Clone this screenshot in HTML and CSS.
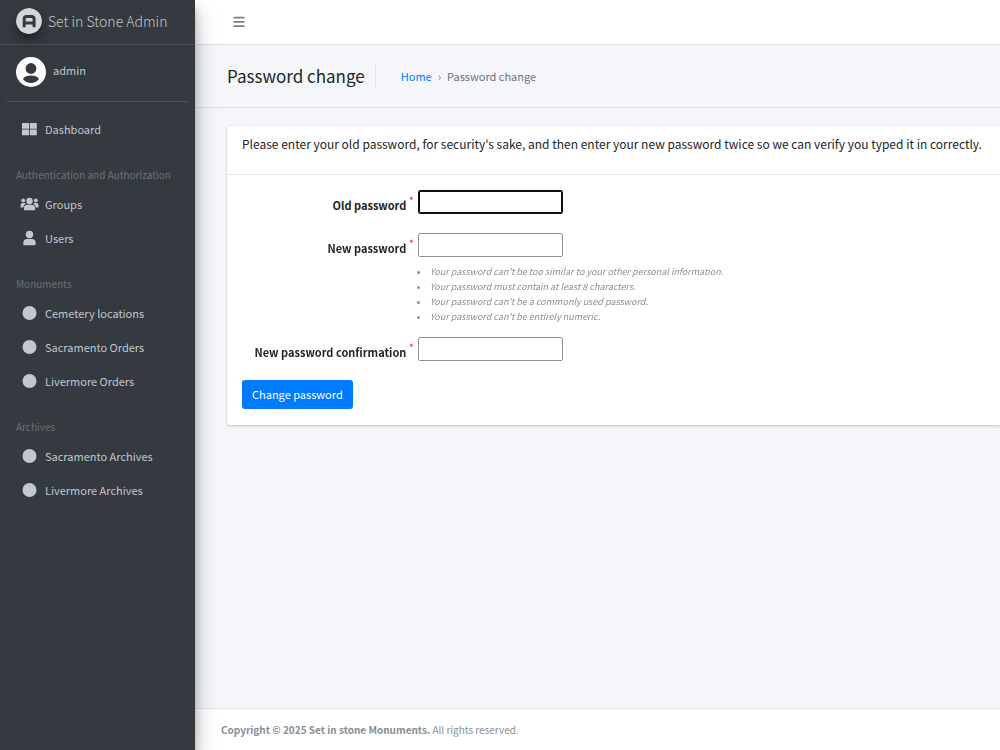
FILE: index.html
```
<!DOCTYPE html>
<html lang="en">
<head>
    <meta charset="UTF-8">
    <meta name="viewport" content="width=device-width, initial-scale=1.0">
    <title>Password change | Set in Stone Admin</title>
    <link rel="stylesheet" href="styles.css">
</head>
<body>
    <aside class="sidebar">
        <a href="#" class="brand">
            <svg class="brand-logo" viewBox="0 0 26 26" aria-hidden="true">
                <circle cx="13" cy="13" r="13" fill="#d5d6d7"/>
                <path d="M8.200 19.300V11Q8.200 8.600 10.600 8.600H15.700Q18.100 8.600 18.100 11V19.300M8.200 14.900H18.100" fill="none" stroke="#343a40" stroke-width="3"/>
            </svg>
            <span>Set in Stone Admin</span>
        </a>

        <div class="user-panel">
            <svg class="avatar" viewBox="0 0 30 30" aria-hidden="true">
                <circle cx="15" cy="15" r="15" fill="#fff"/>
                <circle cx="15" cy="11.500" r="5.400" fill="#343a40"/>
                <path d="M7 22C8.500 19.300 11.500 18.600 15 18.600S21.500 19.300 23 22C21 24.700 18.300 26 15 26S9 24.700 7 22Z" fill="#343a40"/>
            </svg>
            <a href="#">admin</a>
        </div>

        <nav class="menu">
            <a href="#" class="menu-item">
                <svg class="icon" viewBox="0 0 18 16" aria-hidden="true">
                    <path d="M1.500 2H8.500V7.700H1.500ZM9.300 2H16.300V7.700H9.300ZM1.500 8.500H8.500V14.200H1.500ZM9.300 8.500H16.300V14.200H9.300Z"/>
                </svg>
                Dashboard
            </a>

            <h2 class="menu-header">Authentication and Authorization</h2>
            <a href="#" class="menu-item">
                <svg class="icon" viewBox="0 0 18 16" aria-hidden="true">
                    <circle cx="9" cy="5" r="3.200"/>
                    <circle cx="2.700" cy="4.400" r="1.900"/>
                    <circle cx="15.300" cy="4.400" r="1.900"/>
                    <path d="M3.400 14.300V12Q3.600 8.900 6.700 8.700H11.300Q14.400 8.900 14.600 12V14.300ZM0 11.400V9Q.2 7 1.900 7H4.600L5.300 7.400Q3 8.800 2.800 11.400ZM18 11.400V9Q17.800 7 16.100 7H13.400L12.700 7.400Q15 8.800 15.200 11.400Z"/>
                </svg>
                Groups
            </a>
            <a href="#" class="menu-item">
                <svg class="icon" viewBox="0 0 18 16" aria-hidden="true">
                    <circle cx="9" cy="4.500" r="3.700"/>
                    <path d="M2.800 15.300V13Q3 9.200 6.600 9H11.400Q15 9.200 15.200 13V14.300Q15.200 15.300 14.200 15.300Z"/>
                </svg>
                Users
            </a>

            <h2 class="menu-header">Monuments</h2>
            <a href="#" class="menu-item">
                <svg class="icon" viewBox="0 0 18 16" aria-hidden="true"><circle cx="9" cy="8" r="7"/></svg>
                Cemetery locations
            </a>
            <a href="#" class="menu-item">
                <svg class="icon" viewBox="0 0 18 16" aria-hidden="true"><circle cx="9" cy="8" r="7"/></svg>
                Sacramento Orders
            </a>
            <a href="#" class="menu-item">
                <svg class="icon" viewBox="0 0 18 16" aria-hidden="true"><circle cx="9" cy="8" r="7"/></svg>
                Livermore Orders
            </a>

            <h2 class="menu-header">Archives</h2>
            <a href="#" class="menu-item">
                <svg class="icon" viewBox="0 0 18 16" aria-hidden="true"><circle cx="9" cy="8" r="7"/></svg>
                Sacramento Archives
            </a>
            <a href="#" class="menu-item">
                <svg class="icon" viewBox="0 0 18 16" aria-hidden="true"><circle cx="9" cy="8" r="7"/></svg>
                Livermore Archives
            </a>
        </nav>
    </aside>

    <div class="page">
        <header class="topbar">
            <button type="button" class="menu-toggle" aria-label="Toggle menu">
                <svg viewBox="0 0 12 12" aria-hidden="true">
                    <path d="M.5 1.700H11.500M.5 5.900H11.500M.5 10.100H11.500" stroke="#7f7f7f" stroke-width="1.700"/>
                </svg>
            </button>
        </header>

        <div class="content-header">
            <h1>Password change</h1>
            <nav class="breadcrumb" aria-label="Breadcrumb">
                <a href="#">Home</a>
                <span>›</span>
                <span>Password change</span>
            </nav>
        </div>

        <main class="content">
            <form class="card">
                <p class="card-header">Please enter your old password, for security's sake, and then enter your new password twice so we can verify you typed it in correctly.</p>
                <div class="card-body">
                    <div class="form-row">
                        <label for="old-password">Old password <span class="required">*</span></label>
                        <input type="password" id="old-password" autofocus>
                    </div>
                    <div class="form-row">
                        <label for="new-password">New password <span class="required">*</span></label>
                        <div>
                            <input type="password" id="new-password">
                            <ul class="help">
                                <li>Your password can't be too similar to your other personal information.</li>
                                <li>Your password must contain at least 8 characters.</li>
                                <li>Your password can't be a commonly used password.</li>
                                <li>Your password can't be entirely numeric.</li>
                            </ul>
                        </div>
                    </div>
                    <div class="form-row">
                        <label for="confirm-password">New password confirmation <span class="required">*</span></label>
                        <input type="password" id="confirm-password">
                    </div>
                    <button type="submit" class="btn">Change password</button>
                </div>
            </form>
        </main>

        <footer class="footer">
            <strong>Copyright © 2025 Set in stone Monuments.</strong> All rights reserved.
        </footer>
    </div>
</body>
</html>
```
FILE: styles.css
```
* {
    box-sizing: border-box;
}
body {
    margin: 0;
    display: flex;
    min-height: 100vh;
    font-family: "Source Sans Pro", "Noto Sans CJK SC", sans-serif;
    font-size: 11px;
    line-height: 17px;
    color: #212529;
    background: #f4f6f9;
}
a {
    color: #007bff;
    text-decoration: none;
}
.sidebar {
    flex: 0 0 195px;
    position: relative;
    background: #343a40;
    box-shadow: 0 11px 22px rgba(0, 0, 0, 0.25), 0 8px 8px rgba(0, 0, 0, 0.22);
    white-space: nowrap;
}
.brand {
    display: flex;
    align-items: center;
    gap: 6px;
    height: 45px;
    padding: 0 16px 3px;
    border-bottom: 1px solid #454d55;
    color: #c2c4c6;
    font-size: 14px;
    font-weight: 300;
    line-height: 20px;
}
.brand-logo {
    width: 26px;
    height: 26px;
    border-radius: 50%;
    box-shadow: 0 8px 15px rgba(0, 0, 0, 0.19), 0 5px 5px rgba(0, 0, 0, 0.23);
}
.user-panel {
    display: flex;
    align-items: center;
    gap: 7px;
    height: 57px;
    margin: 0 6px;
    padding: 0 10px 3px;
    border-bottom: 1px solid #48515a;
}
.avatar {
    width: 30px;
    height: 30px;
}
.user-panel a,
.menu-item {
    color: #c2c7d0;
}
.user-panel a {
    padding-bottom: 2px;
}
.menu {
    padding: 10px 6px;
}
.menu-item {
    display: flex;
    align-items: center;
    gap: 6px;
    height: 34px;
    padding: 0 14px;
}
.icon {
    width: 19px;
    height: 17px;
    padding-bottom: 1px;
    fill: #c2c7d0;
}
.menu-header {
    margin: 0;
    padding: 21px 10px 4px;
    font-size: 10px;
    font-weight: 400;
    line-height: 16px;
    color: #6c7176;
}
.page {
    flex: 1;
    min-width: 0;
    display: flex;
    flex-direction: column;
}
.topbar {
    display: flex;
    align-items: center;
    height: 45px;
    padding: 0 38px;
    background: #fff;
    border-bottom: 1px solid #dee2e6;
}
.menu-toggle {
    display: flex;
    padding: 0;
    border: none;
    background: none;
    cursor: pointer;
}
.menu-toggle svg {
    width: 12px;
    height: 12px;
}
.content-header {
    display: flex;
    align-items: center;
    gap: 25px;
    height: 63px;
    padding: 0 32px;
    border-bottom: 1px solid #dee2e6;
}
h1 {
    margin: 0;
    padding-right: 10px;
    border-right: 1px solid #dee2e6;
    font-size: 17px;
    font-weight: 400;
    line-height: 22px;
}
.breadcrumb {
    display: flex;
    gap: 6px;
    color: #6c757d;
}
.content {
    flex: 1;
    padding: 18px 0 18px 32px;
}
.card {
    background: #fff;
    border-radius: 3px 0 0 3px;
    box-shadow: 0 0 1px rgba(0, 0, 0, 0.13), 0 1px 3px rgba(0, 0, 0, 0.2);
}
.card-header {
    margin: 0;
    padding: 8px 15px 20px;
    border-bottom: 1px solid #e4e4e4;
    font-size: 12px;
    line-height: 20px;
}
.card-body {
    padding: 15px 15px 16px;
}
.form-row {
    display: grid;
    grid-template-columns: 172px 1fr;
    gap: 4px;
    align-items: start;
    margin-bottom: 19px;
}
label {
    padding-top: 5px;
    text-align: right;
    font-weight: 700;
    white-space: nowrap;
}
.required {
    font-weight: 400;
    vertical-align: super;
    line-height: 1;
    color: #dc3545;
}
input {
    display: block;
    width: 145px;
    height: 24px;
    padding: 1px 2px;
    border: 1px solid #8f8f8f;
    border-radius: 2px;
    background: #fff;
    font: inherit;
}
input:focus {
    outline: 1px solid #101010;
    border-color: #101010;
    outline-offset: -2px;
}
.help {
    margin: 7px 0 -6px;
    padding-left: 12px;
    font-size: 9px;
    font-style: italic;
    line-height: 15px;
    color: #869099;
}
.btn {
    display: block;
    padding: 6px 10px;
    border: none;
    border-radius: 3px;
    background: #007bff;
    color: #fff;
    font: inherit;
    cursor: pointer;
}
.footer {
    padding: 12px 26px;
    border-top: 1px solid #dee2e6;
    background: #fff;
    font-size: 10px;
    color: #869099;
}
```
